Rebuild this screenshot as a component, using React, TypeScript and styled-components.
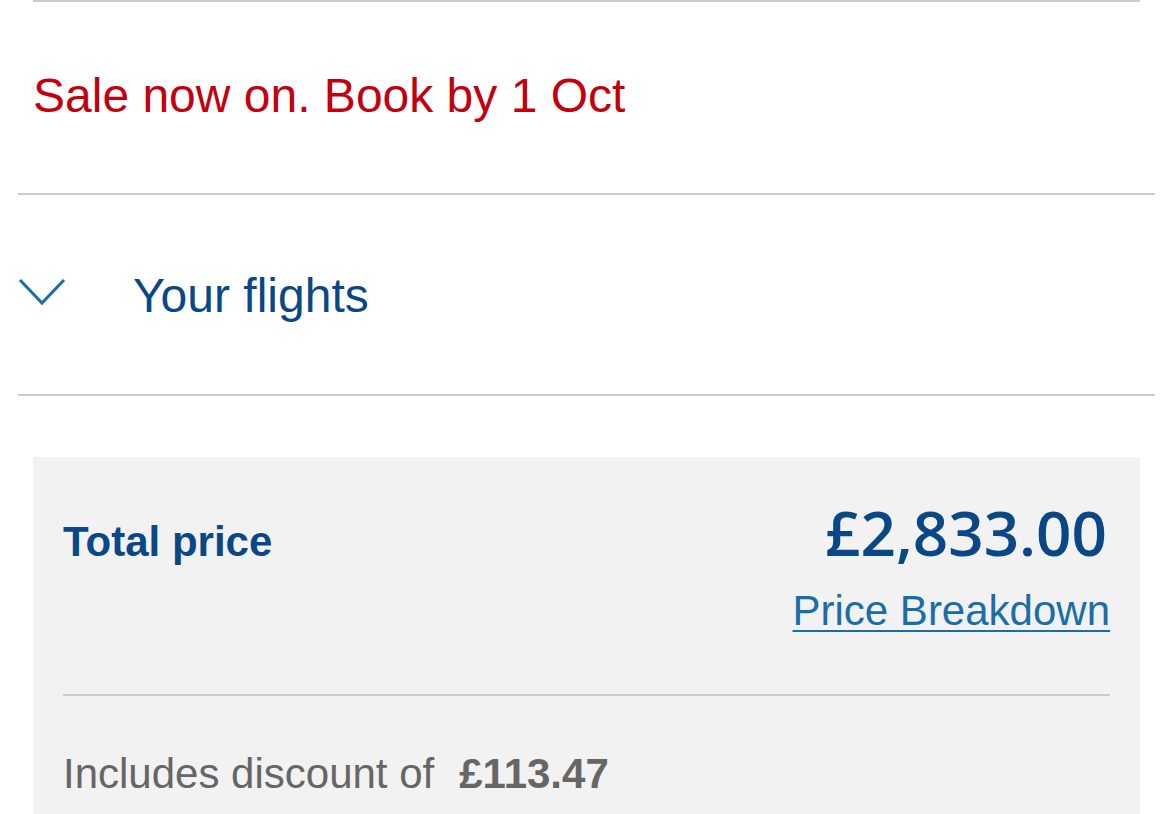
import React from "react";
import styled, { createGlobalStyle } from "styled-components";

const GlobalStyle = createGlobalStyle`
  html, body { margin: 0; padding: 0; background: #ffffff; }
  body { font-family: "Liberation Sans", Arial, sans-serif; overflow: hidden; }
  * { box-sizing: border-box; }
`;

const Page = styled.div`
  width: 1170px;
  height: 814px;
  overflow: hidden;
  display: flex;
  flex-direction: column;
  & > * { flex-shrink: 0; }
`;

const TopRule = styled.div`
  height: 2px;
  margin: 0 30px 0 33px;
  background: #cccccc;
`;

const SaleBanner = styled.div`
  height: 191px;
  padding: 70px 0 0 33px;
  font-size: 48px;
  line-height: 48px;
  color: #c4000e;
`;

const AccordionRow = styled.div`
  display: flex;
  align-items: flex-start;
  gap: 67px;
  margin: 0 15px 0 18px;
  padding: 77px 0 0;
  height: 203px;
  border-top: 2px solid #cccccc;
  border-bottom: 2px solid #cccccc;
`;

const Chevron = styled.svg`
  flex: none;
  margin-top: 6px;
`;

const AccordionTitle = styled.div`
  font-size: 48px;
  line-height: 48px;
  color: #0a4786;
`;

const PriceCard = styled.section`
  margin: 61px 30px 0 33px;
  padding: 44px 30px 40px;
  background: #f2f2f2;
`;

const TotalRow = styled.div`
  display: flex;
  justify-content: space-between;
  align-items: baseline;
`;

const TotalLabel = styled.div`
  font-size: 42px;
  line-height: 42px;
  font-weight: 700;
  color: #0a4786;
`;

const PriceColumn = styled.div`
  display: flex;
  flex-direction: column;
  align-items: flex-end;
`;

const PriceAmount = styled.div`
  font-family: "Open Sans", "Noto Sans", sans-serif;
  font-size: 62px;
  line-height: 62px;
  font-weight: 600;
  letter-spacing: 0;
  color: #0a4786;
  margin-right: 3px;
`;

const BreakdownLink = styled.a`
  margin-top: 28px;
  font-size: 42px;
  line-height: 40px;
  color: #1a6ea8;
  text-decoration: underline;
  text-decoration-thickness: 2px;
  text-underline-offset: 5px;
  cursor: pointer;
`;

const Divider = styled.div`
  height: 2px;
  margin-top: 63px;
  background: #cccccc;
`;

const DiscountLine = styled.div`
  margin-top: 57px;
  font-size: 42px;
  line-height: 42px;
  color: #666666;
  display: flex;
  gap: 25px;
`;

const DiscountAmount = styled.span`
  font-weight: 700;
`;

export default function App() {
  return (
    <Page>
      <GlobalStyle />
      <TopRule />
      <SaleBanner>Sale now on. Book by 1 Oct</SaleBanner>
      <AccordionRow>
        <Chevron width="48" height="28" viewBox="0 0 48 28" aria-hidden="true">
          <polyline
            points="2,2 24,25 46,2"
            fill="none"
            stroke="#1a6ea8"
            strokeWidth="3"
          />
        </Chevron>
        <AccordionTitle>Your flights</AccordionTitle>
      </AccordionRow>
      <PriceCard>
        <TotalRow>
          <TotalLabel>Total price</TotalLabel>
          <PriceColumn>
            <PriceAmount>£2,833.00</PriceAmount>
            <BreakdownLink>Price Breakdown</BreakdownLink>
          </PriceColumn>
        </TotalRow>
        <Divider />
        <DiscountLine>
          <span>Includes discount of</span>
          <DiscountAmount>£113.47</DiscountAmount>
        </DiscountLine>
      </PriceCard>
    </Page>
  );
}
